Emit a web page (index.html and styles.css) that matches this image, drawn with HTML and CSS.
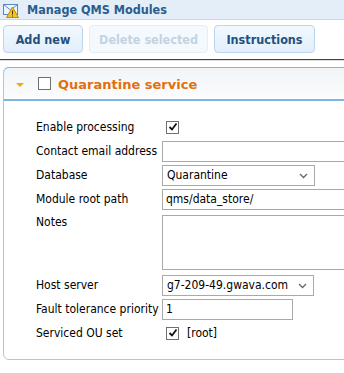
FILE: index.html
```html
<!DOCTYPE html>
<html lang="en">
<head>
    <meta charset="UTF-8">
    <title>Manage QMS Modules</title>
    <link rel="stylesheet" href="styles.css">
</head>
<body>
    <!-- Title bar -->
    <div class="title-bar">
        <svg class="title-icon" width="16" height="16" viewBox="0 0 16 16">
            <rect x="0.5" y="2.5" width="14" height="10" fill="#eef4fb" stroke="#5b86c0"/>
            <path d="M0.5 2.5 L7.5 8 L14.5 2.5" fill="none" stroke="#5b86c0"/>
            <path d="M9.5 5 L15.5 15.5 L3.5 15.5 Z" fill="#f5c518" stroke="#c88a00" stroke-linejoin="round"/>
            <rect x="9" y="8.5" width="1" height="4" fill="#333"/>
            <rect x="9" y="13.5" width="1" height="1" fill="#333"/>
        </svg>
        <span class="title-text">Manage QMS Modules</span>
    </div>

    <!-- Toolbar -->
    <div class="toolbar">
        <button class="tool-button btn-add">Add new</button>
        <button class="tool-button btn-delete" disabled>Delete selected</button>
        <button class="tool-button btn-help">Instructions</button>
    </div>

    <!-- Module panel -->
    <div class="module-panel">
        <div class="panel-header">
            <span class="expander"></span>
            <span class="check-box"></span>
            <span class="panel-title">Quarantine service</span>
        </div>

        <div class="panel-body">
            <div class="field-row">
                <label>Enable processing</label>
                <span class="check-box checked small">
                    <svg width="10" height="10" viewBox="0 0 10 10"><path d="M1.5 5 L4 7.5 L8.5 1.5" fill="none" stroke="#111" stroke-width="1.8"/></svg>
                </span>
            </div>
            <div class="field-row">
                <label>Contact email address</label>
                <input type="text" class="text-input wide">
            </div>
            <div class="field-row">
                <label>Database</label>
                <div class="select-box db-select">
                    <span>Quarantine</span>
                    <svg class="chevron" width="9" height="6" viewBox="0 0 9 6"><path d="M1 1 L4.5 4.5 L8 1" fill="none" stroke="#666" stroke-width="1.3"/></svg>
                </div>
            </div>
            <div class="field-row">
                <label>Module root path</label>
                <input type="text" class="text-input wide" value="qms/data_store/">
            </div>
            <div class="field-row notes-row">
                <label>Notes</label>
                <textarea class="text-input wide notes"></textarea>
            </div>
            <div class="field-row">
                <label>Host server</label>
                <div class="select-box host-select">
                    <span>g7-209-49.gwava.com</span>
                    <svg class="chevron" width="9" height="6" viewBox="0 0 9 6"><path d="M1 1 L4.5 4.5 L8 1" fill="none" stroke="#666" stroke-width="1.3"/></svg>
                </div>
            </div>
            <div class="field-row">
                <label>Fault tolerance priority</label>
                <input type="text" class="text-input short" value="1">
            </div>
            <div class="field-row">
                <label>Serviced OU set</label>
                <div class="ou-set">
                    <span class="check-box checked small">
                        <svg width="10" height="10" viewBox="0 0 10 10"><path d="M1.5 5 L4 7.5 L8.5 1.5" fill="none" stroke="#111" stroke-width="1.8"/></svg>
                    </span>
                    <span>[root]</span>
                </div>
            </div>
        </div>
    </div>
</body>
</html>
```

FILE: styles.css
```css
/* Basic reset */
* {
    box-sizing: border-box;
    margin: 0;
    padding: 0;
}

body {
    font-family: "DejaVu Sans Condensed", "DejaVu Sans", sans-serif;
    font-size: 12px;
    color: #000;
    background-color: #fff;
    width: 344px;
    height: 373px;
    overflow: hidden;
}

/* Title bar */
.title-bar {
    height: 20px;
    background-color: #e4eef9;
    border-bottom: 1px solid #c9d7e6;
    display: flex;
    align-items: center;
    padding-left: 3px;
}

.title-icon {
    margin-right: 8px;
}

.title-text {
    font-weight: bold;
    font-size: 12.5px;
    color: #2b5d8e;
}

/* Toolbar */
.toolbar {
    display: flex;
    gap: 6px;
    padding: 5px 3px 6px 3px;
    border-bottom: 1px solid #444;
    box-shadow: 0 1px 0 #dcdcdc;
}

.tool-button {
    height: 28px;
    border: 1px solid #bcd6ee;
    border-radius: 4px;
    background: linear-gradient(#f2f8fe, #e2effb);
    font-family: inherit;
    font-weight: bold;
    font-size: 12.5px;
    color: #23507c;
}

.btn-add {
    width: 80px;
}

.btn-delete {
    width: 119px;
    color: #c2d3e3;
    border-color: #e3eef9;
    background: #f4f9fe;
}

.btn-help {
    width: 101px;
}

/* Module panel */
.module-panel {
    margin: 7px 0 0 3px;
    width: 360px;
    height: 293px;
    border: 1px solid #aac8e4;
    border-radius: 6px;
}

.panel-header {
    height: 34px;
    display: flex;
    align-items: center;
    padding-top: 2px;
    border-top: 1px solid #7ab7e2;
    border-bottom: 2px solid #7ab7e2;
    border-radius: 6px 0 0 0;
    background: linear-gradient(#f1f5f7, #fbfcfe);
    margin-top: -1px;
    margin-left: -1px;
    border-left: 1px solid #aac8e4;
}

.expander {
    width: 0;
    height: 0;
    border-left: 4px solid transparent;
    border-right: 4px solid transparent;
    border-top: 4px solid #f0aa00;
    margin: 0 0 0 12px;
}

.check-box {
    width: 13px;
    height: 13px;
    border: 1px solid #707070;
    background: #fff;
    display: inline-flex;
    align-items: center;
    justify-content: center;
}

.panel-header .check-box {
    margin-left: 14px;
    margin-top: -3px;
}

.panel-title {
    margin-left: 7px;
    font-family: "DejaVu Sans", sans-serif;
    font-weight: bold;
    font-size: 13px;
    color: #e2700e;
}

.panel-body {
    padding: 14px 0 0 32px;
}

.field-row {
    display: flex;
    align-items: center;
    height: 24px;
}

.field-row label {
    width: 126px;
    flex-shrink: 0;
}

.field-row .check-box.small {
    margin-left: 4px;
}

.text-input {
    height: 21px;
    border: 1px solid #a9a9a9;
    font-family: inherit;
    font-size: 12px;
    padding: 0 3px;
    background: #fff;
}

.wide {
    width: 200px;
}

.short {
    width: 131px;
}

.notes-row {
    height: 62px;
    align-items: flex-start;
    padding-top: 4px;
}

.notes {
    height: 55px;
    resize: none;
}

.select-box {
    position: relative;
    height: 21px;
    border: 1px solid #a9a9a9;
    display: flex;
    align-items: center;
    padding-left: 4px;
}

.db-select {
    width: 153px;
}

.host-select {
    width: 152px;
}

.chevron {
    position: absolute;
    right: 6px;
    top: 7px;
}

.ou-set {
    display: flex;
    align-items: center;
    gap: 8px;
}
```
